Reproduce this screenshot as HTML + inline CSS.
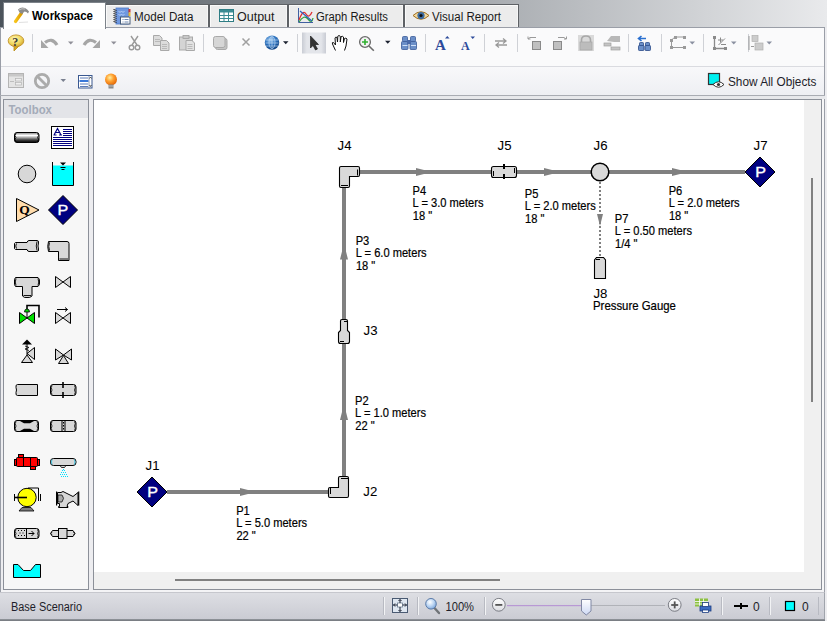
<!DOCTYPE html>
<html><head><meta charset="utf-8"><style>
html,body{margin:0;padding:0;width:827px;height:621px;overflow:hidden;background:#ededf0;font-family:"Liberation Sans",sans-serif;}
.a{position:absolute;margin:0;padding:0}
.tab{position:absolute;top:4px;height:24px;background:#ececec;border:1px solid #5e6165;border-bottom:none;box-sizing:border-box;box-shadow:inset 1px 1px 0 #fafafa, inset -1px 0 0 #f6f6f6}
.tt{position:absolute;font-size:12px;color:#1a1a1a;white-space:nowrap}
svg{position:absolute;left:0;top:0;overflow:visible}
</style></head><body>
<!-- top tab strip -->
<div class="a" style="left:0;top:0;width:827px;height:28px;background:linear-gradient(to right,#4b535b 0%,#e9eaec 100%)"></div>
<!-- tabs -->
<div class="tab" style="left:105px;width:104px"></div>
<div class="tab" style="left:209px;width:79px"></div>
<div class="tab" style="left:288px;width:116px"></div>
<div class="tab" style="left:404px;width:115px"></div>

<!-- toolbar -->
<div class="a" style="left:0;top:27px;width:825px;height:69px;background:#fafafb;border:1px solid #9a9ea7;border-bottom:none;box-sizing:border-box"></div>
<div class="a" style="left:3px;top:2px;width:103px;height:27px;background:#fff;border:1px solid #7d838a;border-bottom:none;box-sizing:border-box"></div>
<div class="a" style="left:1px;top:66px;width:823px;height:1px;background:#dadbe0"></div>
<div class="a" style="left:1px;top:67px;width:823px;height:28px;background:linear-gradient(#f8f8fa,#eeeff3)"></div>
<div class="a" style="left:0;top:95px;width:825px;height:1px;background:#a9acb3"></div>
<div class="a" style="left:0;top:96px;width:1px;height:525px;background:#9a9ea7"></div>
<div class="a" style="left:824px;top:96px;width:1px;height:525px;background:#9a9ea7"></div>
<div class="a" style="left:822px;top:99px;width:2px;height:491px;background:#f7f7f8"></div>
<div class="a" style="left:1px;top:96px;width:824px;height:3px;background:#e7e8eb"></div>
<!-- toolbox panel -->
<div class="a" style="left:3px;top:99px;width:86px;height:491px;border:1px solid #8c9099;box-sizing:border-box;background:#f7f7f7"></div>
<div class="a" style="left:4px;top:100px;width:84px;height:18px;background:#e3e4e8"></div>
<svg width="827" height="621" viewBox="0 0 827 621"><text transform="translate(8.5,113.6) scale(0.95,1)" font-family="Liberation Sans" font-weight="bold" font-size="12" fill="#a4abb8">Toolbox</text></svg>

<!-- canvas panel -->
<div class="a" style="left:93px;top:99px;width:729px;height:491px;border:1px solid #8c9099;box-sizing:border-box;background:#fff"></div>
<div class="a" style="left:804px;top:100px;width:17px;height:489px;background:#f0f0f0"></div>
<div class="a" style="left:94px;top:572px;width:727px;height:17px;background:#f0f0f0"></div>
<div class="a" style="left:811px;top:178px;width:2px;height:224px;background:#808080"></div>
<div class="a" style="left:175px;top:579px;width:325px;height:2px;background:#808080"></div>


<!-- tab content -->
<svg width="827" height="621" viewBox="0 0 827 621">
  <defs>
    <linearGradient id="hmr" x1="0" y1="0" x2="1" y2="0"><stop offset="0" stop-color="#f7c31a"/><stop offset="1" stop-color="#d99a00"/></linearGradient>
    <radialGradient id="help" cx="0.4" cy="0.35" r="0.7"><stop offset="0" stop-color="#fff6b0"/><stop offset="0.6" stop-color="#f1d860"/><stop offset="1" stop-color="#cfa02a"/></radialGradient>
    <radialGradient id="globe" cx="0.4" cy="0.3" r="0.75"><stop offset="0" stop-color="#9cc8f0"/><stop offset="0.5" stop-color="#2f74c0"/><stop offset="1" stop-color="#0a3a78"/></radialGradient>
    <radialGradient id="bulb" cx="0.4" cy="0.35" r="0.7"><stop offset="0" stop-color="#fff0a0"/><stop offset="0.45" stop-color="#ffa030"/><stop offset="1" stop-color="#e06000"/></radialGradient>
    <linearGradient id="selbtn" x1="0" y1="0" x2="1" y2="0"><stop offset="0" stop-color="#c9ccd4"/><stop offset="0.2" stop-color="#e3e5ea"/><stop offset="0.8" stop-color="#e3e5ea"/><stop offset="1" stop-color="#c9ccd4"/></linearGradient>
  </defs>
  <!-- Workspace tab -->
  <g>
    <line x1="15.5" y1="21.5" x2="21.5" y2="13" stroke="url(#hmr)" stroke-width="3.2" stroke-linecap="round"/>
    <path d="M18,9.5 Q21,6.5 25,8 Q27.5,9 29,11.5 L28,13.5 Q26.5,11.5 24.5,11.5 L22,14 L19.5,12.5 Z" fill="#8c8c8c"/>
    <path d="M19,10 Q22,8 25,9" stroke="#d0d0d0" stroke-width="0.8" fill="none"/>
    <line x1="19" y1="22.5" x2="28" y2="22" stroke="#e0e0e0" stroke-width="1"/>
  </g>
  <text x="32" y="20" font-family="Liberation Sans" font-weight="bold" font-size="12" fill="#000" textLength="61" lengthAdjust="spacingAndGlyphs">Workspace</text>
  <!-- Model Data icon -->
  <g>
    <rect x="116" y="8" width="12.5" height="16" fill="#6f98e0"/>
    <rect x="116" y="8" width="12.5" height="16" fill="none" stroke="#4c78c8" stroke-width="0.8"/>
    <path d="M118.5,11 l1.5,1.5 l1.5,-1.5 l1.5,1.5 l1.5,-1.5 M118.5,14 l1.5,1.5 l1.5,-1.5 l1.5,1.5 l1.5,-1.5" stroke="#c8dcf8" stroke-width="0.8" fill="none"/>
    <path d="M113.5,9.5 q2,0.5 3,1 M113.5,11.5 q2,0.5 3,1 M113.5,13.5 q2,0.5 3,1 M113.5,15.5 q2,0.5 3,1 M113.5,17.5 q2,0.5 3,1 M113.5,19.5 q2,0.5 3,1 M113.5,21.5 q2,0.5 3,1" stroke="#222" stroke-width="1" fill="none"/>
    <rect x="120.5" y="17" width="9.5" height="7" fill="#fff" stroke="#445a78" stroke-width="1"/>
    <path d="M122.5,19.5h1 M124.5,19.5h4 M122.5,22h1 M124.5,22h4" stroke="#6f88b0" stroke-width="1"/>
    <rect x="128.5" y="9" width="2" height="3.5" fill="#c83838"/><rect x="128.5" y="12.5" width="2" height="3.5" fill="#e8b830"/>
  </g>
  <text x="134" y="20.5" font-family="Liberation Sans" font-size="12" fill="#1a1a1a" textLength="59.5" lengthAdjust="spacingAndGlyphs">Model Data</text>
  <!-- Output icon -->
  <g>
    <rect x="219.5" y="9.5" width="14" height="12" fill="#fff" stroke="#2e7d84" stroke-width="1"/>
    <rect x="220" y="10" width="13" height="2.5" fill="#3c8c94"/>
    <path d="M220,15.5h13 M220,18.5h13 M224,10v11 M228.5,10v11" stroke="#3c8c94" stroke-width="1"/>
  </g>
  <text x="237" y="20.5" font-family="Liberation Sans" font-size="12" fill="#1a1a1a" textLength="37.5" lengthAdjust="spacingAndGlyphs">Output</text>
  <!-- Graph Results icon -->
  <g>
    <path d="M298.5,8 V22.5 H313" stroke="#4060a0" stroke-width="1" fill="none"/>
    <path d="M299,20 Q303,9 306,14 T312,12" stroke="#e03030" stroke-width="1.3" fill="none"/>
    <path d="M299,22 Q304,14 308,19 T313,18" stroke="#30a040" stroke-width="1.3" fill="none"/>
    <path d="M300,11 L312,21" stroke="#3060c0" stroke-width="1.2" fill="none"/>
  </g>
  <text x="316" y="20.5" font-family="Liberation Sans" font-size="12" fill="#1a1a1a" textLength="72" lengthAdjust="spacingAndGlyphs">Graph Results</text>
  <!-- Visual Report icon -->
  <g>
    <path d="M413,15.5 Q421,8 429,15.5 Q421,23 413,15.5 Z" fill="#f2d9a0" stroke="#a07020" stroke-width="1"/>
    <circle cx="421" cy="15.5" r="3.6" fill="#3a6aa0"/>
    <circle cx="421" cy="15.5" r="1.6" fill="#111"/>
  </g>
  <text x="432" y="20.5" font-family="Liberation Sans" font-size="12" fill="#1a1a1a" textLength="69" lengthAdjust="spacingAndGlyphs">Visual Report</text>

  <!-- ===== toolbar row 1 ===== -->
  <g>
    <!-- help -->
    <path d="M14,45 L14,51 L19.5,45.5 Z" fill="#d8a820" stroke="#b88a10" stroke-width="0.8"/>
    <ellipse cx="16" cy="40.8" rx="7.8" ry="5.9" fill="url(#help)" stroke="#c29228" stroke-width="0.9"/>
    <text x="12.3" y="46" font-family="Liberation Serif" font-weight="bold" font-size="12" fill="#3a3a3a">?</text>
    <!-- separators -->
    <g fill="#cfd1d6">
      <rect x="32" y="34" width="1" height="18"/>
      <rect x="203" y="34" width="1" height="18"/>
      <rect x="297" y="34" width="1" height="18"/>
      <rect x="425" y="34" width="1" height="18"/>
      <rect x="484" y="34" width="1" height="18"/>
      <rect x="517" y="34" width="1" height="18"/>
      <rect x="628" y="34" width="1" height="18"/>
      <rect x="661" y="34" width="1" height="18"/>
      <rect x="703" y="34" width="1" height="18"/>
      <rect x="748" y="34" width="1" height="18"/>
    </g>
    <!-- undo / redo -->
    <path d="M57,45 Q52,37 45,42.5" stroke="#a6a6a6" stroke-width="3.2" fill="none"/>
    <path d="M41,40 L41,48 L48.5,48 Z" fill="#a6a6a6"/>
    <path d="M84,45 Q89,37 96,42.5" stroke="#a6a6a6" stroke-width="3.2" fill="none"/>
    <path d="M100,40 L100,48 L92.5,48 Z" fill="#a6a6a6"/>
    <g fill="#8f8f98">
      <path d="M68,41.5 h5.5 l-2.75,3 Z"/>
      <path d="M111,41.5 h5.5 l-2.75,3 Z"/>
    </g>
    <!-- scissors -->
    <g stroke="#9a9a9a" fill="none" stroke-width="1.4">
      <path d="M131,36 L137,45 M138,36 L132,45"/>
      <circle cx="131.5" cy="47.5" r="2.3"/>
      <circle cx="137.5" cy="47.5" r="2.3"/>
    </g>
    <!-- copy -->
    <g fill="#dcdcdc" stroke="#a9a9a9" stroke-width="1">
      <path d="M153.5,35.5 h6 l2.5,2.5 v7.5 h-8.5 Z"/>
      <path d="M160.5,40.5 h6 l2.5,2.5 v7.5 h-8.5 Z"/>
    </g>
    <path d="M155,39.5h5 M155,41.5h5 M162,44.5h5 M162,46.5h5 M162,48.5h5" stroke="#b0b0b0" stroke-width="0.8"/>
    <!-- paste -->
    <rect x="179.5" y="37" width="13" height="13" fill="#d4d4d4" stroke="#a9a9a9" stroke-width="1"/>
    <rect x="183" y="35.5" width="6" height="3" fill="#c8c8c8" stroke="#a0a0a0" stroke-width="0.8"/>
    <path d="M186,40.5 h6 l2.5,2.5 v7.5 h-8.5 Z" fill="#e2e2e2" stroke="#a9a9a9" stroke-width="1"/>
    <path d="M187.5,44.5h5 M187.5,46.5h5 M187.5,48.5h5" stroke="#b0b0b0" stroke-width="0.8"/>
    <!-- duplicate -->
    <rect x="215.5" y="38.5" width="11.5" height="11" rx="2" fill="#c4c4c4" stroke="#a9a9a9" stroke-width="1"/>
    <rect x="213.5" y="36.5" width="11.5" height="11" rx="2" fill="#d6d6d6" stroke="#a9a9a9" stroke-width="1"/>
    <!-- X -->
    <path d="M242.5,38.5 L249.5,45.5 M249.5,38.5 L242.5,45.5" stroke="#a0a0a0" stroke-width="1.5"/>
    <!-- globe -->
    <circle cx="272" cy="42.6" r="7.2" fill="url(#globe)"/>
    <g stroke="#c8e0f8" stroke-width="0.7" fill="none" opacity="0.85">
      <ellipse cx="272" cy="42.6" rx="3" ry="6"/>
      <path d="M265.5,40h13 M265.5,43h13 M266,46h12 M272,36.6v12"/>
    </g>
    <path d="M283,41.2 h5.5 l-2.75,3 Z" fill="#1c2230"/>
    <!-- selected pointer button -->
    <rect x="302" y="32.5" width="24" height="21" fill="url(#selbtn)"/>
    <path d="M310.5,36 L310.5,48 L313,45.5 L315.5,50 L317.5,49 L315,44.5 L318.5,44.5 Z" fill="#333" stroke="#111" stroke-width="0.6"/>
    <!-- hand -->
    <path d="M335.5,50.5 L332.5,44 Q331.8,42 333.5,42.5 L335.5,45 L335,38 Q335.5,36.5 337,37.5 L337.5,42 L337.8,36.2 Q339,34.8 340.3,36.3 L340.3,42 L341,36.8 Q342.3,35.6 343.5,37 L343.5,42.5 L344.5,38.5 Q346,37.5 347,39 L346,46 L344.5,50.5" fill="#fff" stroke="#111" stroke-width="1"/>
    <!-- zoom -->
    <circle cx="365" cy="42" r="5.4" fill="#f4f4f4" stroke="#6a6a6a" stroke-width="1.3"/>
    <path d="M369,46 L373.8,50.8" stroke="#6a6a6a" stroke-width="1.6"/>
    <path d="M362,42h6 M365,39v6" stroke="#30b030" stroke-width="1.6"/>
    <path d="M385,40.8 h5.5 l-2.75,3 Z" fill="#1c2230"/>
    <!-- binoculars -->
    <g fill="#6b8fc8" stroke="#3b5a98" stroke-width="0.8">
      <rect x="402.5" y="36.5" width="5" height="5" rx="1"/>
      <rect x="410.5" y="36.5" width="5" height="5" rx="1"/>
      <rect x="401.5" y="41.5" width="6.5" height="8" rx="1"/>
      <rect x="410" y="41.5" width="6.5" height="8" rx="1"/>
    </g>
    <rect x="407" y="40" width="4" height="4" fill="#4a6aa8"/>
    <path d="M402.5,45.5h5 M411,45.5h5" stroke="#cfe0f8" stroke-width="1"/>
    <!-- A+ A- -->
    <text x="435" y="50" font-family="Liberation Serif" font-weight="bold" font-size="15" fill="#2c4a9a">A</text>
    <path d="M445,38.5 L447.3,36 L449.6,38.5 Z" fill="#2c4a9a"/>
    <text x="461" y="50" font-family="Liberation Serif" font-weight="bold" font-size="12" fill="#2c4a9a">A</text>
    <path d="M470.5,36.5 L475,36.5 L472.75,39 Z" fill="#2c4a9a"/>
    <!-- swap -->
    <g stroke="#9a9a9a" stroke-width="1.3" fill="none">
      <path d="M495,41 H506 M503,38.5 L506,41 L503,43.5"/>
      <path d="M507,45 H496 M499,42.5 L496,45 L499,47.5"/>
    </g>
    <!-- box arrows -->
    <rect x="532.5" y="41.5" width="8" height="8" fill="#c0c0c0" stroke="#8a8a8a" stroke-width="1"/>
    <path d="M528,39 L530,37.5 H536 M528,36.5 V39 H530.5" stroke="#9a9a9a" stroke-width="1" fill="none"/>
    <rect x="553.5" y="41.5" width="8" height="8" fill="#c0c0c0" stroke="#8a8a8a" stroke-width="1"/>
    <path d="M558,37.5 H564 L566,39 M566.5,36.5 V39 H564" stroke="#9a9a9a" stroke-width="1" fill="none"/>
    <!-- lock -->
    <rect x="578" y="35" width="16" height="16" fill="#dadada"/>
    <path d="M581.5,42 V40 Q581.5,36 586,36 Q590.5,36 590.5,40 V42" stroke="#a8a8a8" stroke-width="1.6" fill="none"/>
    <rect x="580" y="42" width="12" height="8" fill="#bcbcbc" stroke="#a8a8a8" stroke-width="0.8"/>
    <!-- layer icon -->
    <path d="M607,41 L611,36 H620 V42 L614,42 Z" fill="#b8b8b8"/>
    <rect x="604" y="43" width="7" height="3" fill="#c4c4c4" stroke="#a0a0a0" stroke-width="0.7"/>
    <rect x="611" y="47" width="9" height="3" fill="#c4c4c4" stroke="#a0a0a0" stroke-width="0.7"/>
    <!-- binoculars with arrow -->
    <g fill="#6b8fc8" stroke="#2b4a88" stroke-width="0.8">
      <rect x="639.5" y="42.5" width="4" height="4" rx="0.8"/>
      <rect x="645.5" y="42.5" width="4" height="4" rx="0.8"/>
      <rect x="638.5" y="45.5" width="5.5" height="5" rx="0.8"/>
      <rect x="645" y="45.5" width="5.5" height="5" rx="0.8"/>
    </g>
    <path d="M646,38.5 H639 M641.5,36 L638.5,38.5 L641.5,41" stroke="#2a70d0" stroke-width="1.6" fill="none"/>
    <!-- polyline -->
    <path d="M671.5,47.5 L671.5,40 L675,37 H684.5 M671.5,47.5 H684.5" stroke="#9a9a9a" stroke-width="1" fill="none"/>
    <g fill="#9a9a9a">
      <rect x="670" y="46" width="3" height="3"/><rect x="670" y="39" width="3" height="3"/><rect x="674" y="36" width="3" height="3"/><rect x="683" y="36" width="3" height="3"/><rect x="683" y="46" width="3" height="3"/>
    </g>
    <path d="M689.5,41.5 h5.5 l-2.75,3 Z" fill="#8a90a0"/>
    <!-- axis -->
    <path d="M714.5,37 V48.5 H726" stroke="#8a8a8a" stroke-width="1.3" fill="none"/>
    <rect x="713" y="36" width="3" height="3" fill="#8a8a8a"/><rect x="713" y="47" width="3" height="3" fill="#8a8a8a"/><rect x="724" y="47" width="3" height="3" fill="#8a8a8a"/>
    <path d="M718,40h5 M720.5,37.5v5 M718.5,45 L725,38.5 M721,44.5h5" stroke="#8a8a8a" stroke-width="1" fill="none"/>
    <path d="M731,41.5 h5.5 l-2.75,3 Z" fill="#8a90a0"/>
    <!-- align -->
    <rect x="748.5" y="36" width="1" height="14" fill="#9a9a9a"/>
    <rect x="752" y="35.5" width="6" height="6" fill="#cccccc" stroke="#b0b0b0" stroke-width="0.7"/>
    <rect x="755" y="43" width="8" height="7" fill="#cccccc" stroke="#b0b0b0" stroke-width="0.7"/>
    <path d="M751,46.5h3" stroke="#9a9a9a" stroke-width="1"/>
    <path d="M766.5,41.5 h5.5 l-2.75,3 Z" fill="#8a90a0"/>
  </g>

  <!-- ===== toolbar row 2 ===== -->
  <g>
    <rect x="8.5" y="73.5" width="15" height="14" fill="#e4e4e4" stroke="#b4b4b4" stroke-width="1"/>
    <rect x="9" y="74" width="14" height="2.5" fill="#c8c8c8"/>
    <rect x="15.5" y="78.5" width="6" height="2.5" fill="#efefef" stroke="#b4b4b4" stroke-width="0.7"/>
    <rect x="15.5" y="82.5" width="6" height="2.5" fill="#efefef" stroke="#b4b4b4" stroke-width="0.7"/>
    <path d="M10,81.5h4" stroke="#b4b4b4" stroke-width="0.8"/>
    <circle cx="42" cy="81" r="6.7" fill="none" stroke="#ababab" stroke-width="2.8"/>
    <path d="M37.5,76.5 L46.5,85.5" stroke="#ababab" stroke-width="2.8"/>
    <path d="M60.5,79 h5.5 l-2.75,3 Z" fill="#7a8090"/>
    <rect x="78.5" y="75.5" width="13.5" height="12.5" fill="#fff" stroke="#3a5890" stroke-width="1"/>
    <path d="M80,78h8 M80,81h8 M80,84h8 M80,86.5h8" stroke="#5a7ab8" stroke-width="1"/>
    <rect x="79.5" y="80" width="9" height="2" fill="#3a78d8"/>
    <path d="M89,76v12" stroke="#7a8aa8" stroke-width="0.8"/>
    <path d="M89.5,78.5 L90.5,77 L91.5,78.5 M89.5,85 L90.5,86.5 L91.5,85" stroke="#333" stroke-width="0.8" fill="none"/>
    <circle cx="111" cy="79.5" r="6" fill="url(#bulb)"/>
    <rect x="108.5" y="84.5" width="5" height="4" fill="#8a8a8a"/>
    <path d="M108.5,86h5" stroke="#c8c8c8" stroke-width="0.8"/>
    <!-- show all objects -->
    <rect x="708.5" y="73.5" width="11" height="11" fill="#00f0f0" stroke="#333" stroke-width="1.2"/>
    <path d="M713,84.5 Q718.5,79 724,84.5 Q718.5,90 713,84.5 Z" fill="#fff" stroke="#333" stroke-width="1"/>
    <circle cx="718.5" cy="84.5" r="1.6" fill="#333"/>
  </g>
  <text x="728" y="86" font-family="Liberation Sans" font-size="12" fill="#1e1e2a" textLength="88.5" lengthAdjust="spacingAndGlyphs">Show All Objects</text>
</svg>


<!-- toolbox icons -->
<svg width="827" height="621" viewBox="0 0 827 621">
  <defs>
    <linearGradient id="pipeg" x1="0" y1="0" x2="0" y2="1"><stop offset="0" stop-color="#808080"/><stop offset="0.3" stop-color="#ffffff"/><stop offset="0.75" stop-color="#404040"/><stop offset="1" stop-color="#000"/></linearGradient>
  </defs>
  <!-- pipe -->
  <rect x="14.5" y="132.5" width="24.5" height="10" rx="2.5" fill="url(#pipeg)" stroke="#000" stroke-width="1"/>
  <path d="M16,133.5 Q14,135.5 16,137.5 Q14,139.5 16,141.5 M37.5,133.5 Q39.5,135.5 37.5,137.5 Q39.5,139.5 37.5,141.5" stroke="#000" stroke-width="0.8" fill="none"/>
  <!-- annotation -->
  <rect x="51.5" y="126.5" width="22" height="22" fill="#fff" stroke="#000" stroke-width="1"/>
  <path d="M54,135 L57.5,128.5 L61,135 M55.5,132.5h4 M53.5,135h3 M59,135h3" stroke="#000080" stroke-width="1.2" fill="none"/>
  <path d="M63,129.5h9 M63,131.5h9 M63,133.5h9 M63,135.5h9 M53,137.5h19 M53,139.5h19 M53,141.5h19 M53,143.5h19 M53,145.5h19" stroke="#000080" stroke-width="1"/>
  <!-- circle junction -->
  <circle cx="27" cy="174" r="8.8" fill="#d8d8d8" stroke="#000" stroke-width="1"/>
  <!-- reservoir -->
  <rect x="52.5" y="165.5" width="21" height="20" fill="#00ffff"/>
  <path d="M52.5,162 V185.5 H73.5 V162" stroke="#000" stroke-width="1" fill="none"/>
  <path d="M60,162.5 h6 l-3,3 Z" fill="#000"/>
  <path d="M60.5,167.5h5 M61.5,169.5h3" stroke="#000" stroke-width="1"/>
  <!-- Q -->
  <path d="M16.5,198.5 L39,210 L16.5,221.5 Z" fill="#ffdcac" stroke="#000" stroke-width="1"/>
  <text transform="translate(19.3,213.5) scale(1,1)" font-family="Liberation Serif" font-weight="bold" font-size="13.5" fill="#000">Q</text>
  <!-- P diamond -->
  <polygon points="63,195.5 77.5,210 63,224.5 48.5,210" fill="#000080" stroke="#000" stroke-width="1"/>
  <text transform="translate(57.6,215) scale(1.15,1)" font-family="Liberation Sans" font-size="14" fill="#fff" stroke="#fff" stroke-width="0.35">P</text>

  <g fill="#d8d8d8" stroke="#000" stroke-width="1">
    <!-- reducer -->
    <path d="M15.5,242.5 H27 Q27.5,240.5 29,240.5 H37 Q39,240.5 38.5,243 Q37.5,246 38.5,249 Q39,251.5 37,251.5 H29 Q27.5,251.5 27,249.5 H15.5 Q14,249.5 14.5,246 Q14,242.5 15.5,242.5 Z"/>
    <!-- elbow -->
    <path d="M48.5,241.5 H67 Q69,241.5 69,243.5 V260.5 H58.5 V251.5 H48.5 Q47,246.5 48.5,241.5 Z"/>
    <!-- tee -->
    <path d="M15.5,277.5 H38 Q40,279 39.5,282 Q40,285 38,286.5 H32 V296 Q30,298 27,297.5 Q24,298 22.5,296 V286.5 H15.5 Q14,285 14.5,282 Q14,279 15.5,277.5 Z"/>
    <!-- valve -->
    <path d="M55.5,276.5 L63,282 L70.5,276.5 V287.5 L63,282 L55.5,287.5 Z"/>
    <!-- check valve -->
    <path d="M55.5,312.5 L63,318 L70.5,312.5 V323.5 L63,318 L55.5,323.5 Z"/>
    <!-- relief valve -->
    <path d="M27,353.5 L34.5,347.5 V359.5 Z"/>
    <path d="M21.5,362.5 L27,355 L32.5,362.5 Z"/>
    <!-- 3 way -->
    <path d="M55.5,349 L63.5,355 L71.5,349 V360 L63.5,355 L55.5,360 Z"/>
    <path d="M58.5,363.5 L63.5,355.5 L68.5,363.5 Z"/>
    <!-- dead end -->
    <path d="M17.5,384.5 H37.5 V395.5 H17.5 Q15.5,395.5 16,392.5 Q17,390 16,387.5 Q15.5,384.5 17.5,384.5 Z"/>
    <!-- orifice -->
    <rect x="50.5" y="384.5" width="25.5" height="11" rx="2.5"/>
    <!-- venturi -->
    <rect x="14.5" y="420.5" width="24" height="11" rx="2.5"/>
    <!-- screen -->
    <rect x="50.5" y="420.5" width="25.5" height="11" rx="2.5"/>
    <!-- spray -->
    <rect x="50.5" y="458.5" width="25.5" height="7" rx="3"/>
    <!-- turbine body -->
    <path d="M57.5,492.5 H61 L63,491.5 L73,496.5 L78,492.5 V505.5 L73,501 L68,503.5 L67,506.5 H68 V507.5 H58.5 V506.5 H59.5 V503.5 H57.5 Z"/>
    <!-- filter -->
    <rect x="14.5" y="528.5" width="24.5" height="10" rx="2.5"/>
    <!-- pressure loss -->
    <path d="M50.5,533.5 L52.5,530.5 H73 L75,533.5 L73,536.5 H52.5 Z"/>
    <rect x="58.5" y="528.5" width="8.5" height="10"/>
  </g>
  <!-- pipe end curls -->
  <path d="M16,421.5 Q14.5,423.5 16,426 Q14.5,428.5 16,430.5 M37,421.5 Q38.5,423.5 37,426 Q38.5,428.5 37,430.5 M52,421.5 Q50.5,423.5 52,426 Q50.5,428.5 52,430.5 M74.5,421.5 Q76,423.5 74.5,426 Q76,428.5 74.5,430.5 M52,385.5 Q50.5,387.5 52,390 Q50.5,392.5 52,394.5 M74.5,385.5 Q76,387.5 74.5,390 Q76,392.5 74.5,394.5 M16,529.5 Q14.5,531.5 16,533.5 Q14.5,535.5 16,537.5 M37.5,529.5 Q39,531.5 37.5,533.5 Q39,535.5 37.5,537.5" stroke="#000" stroke-width="0.8" fill="none"/>
  <path d="M16.5,243.5 Q15,246 16.5,248.5 M37,241.5 Q35.5,246 37,250.5 M49.5,242.5 Q48,246.5 49.5,250.5 M59.5,259 H68 M16,278.5 Q14.5,282 16,285.5 M38,278.5 Q39.5,282 38,285.5 M23.5,295.5 H31" stroke="#000" stroke-width="0.9" fill="none"/>
  <!-- orifice tick -->
  <path d="M63,382 V388 M63,392 V398" stroke="#000" stroke-width="1.6"/>
  <!-- venturi throat -->
  <path d="M20,421 L24,423.3 H30 L34,421 Z M20,431 L24,428.7 H30 L34,431 Z" fill="#000"/>
  <!-- screen dashes -->
  <path d="M62,421 V431 M65,421 V431" stroke="#000" stroke-width="1"/>
  <path d="M63.5,422v1.5 M63.5,425v1.5 M63.5,428v1.5" stroke="#000" stroke-width="1"/>
  <!-- green control valve -->
  <path d="M19.5,312.5 L27,318 L34.5,312.5 V323.5 L27,318 L19.5,323.5 Z" fill="#00e000" stroke="#000" stroke-width="1"/>
  <path d="M27,318 V311" stroke="#000" stroke-width="1"/>
  <path d="M24.5,312 Q24.5,309 27,309 Q29.5,309 29.5,312 Z" fill="#00e000" stroke="#000" stroke-width="0.8"/>
  <path d="M27,309 V305.5 H39 V317.5" stroke="#000" stroke-width="1.6" fill="none"/>
  <!-- check arrow -->
  <path d="M57,309.5 H67.5 M65,307.5 L67.5,309.5 L65,311.5" stroke="#000" stroke-width="1" fill="none"/>
  <!-- relief stem -->
  <path d="M27,355 V344" stroke="#000" stroke-width="1"/>
  <path d="M22,344.5 L27,339.5 L32,344.5 Z" fill="#000"/>
  <path d="M25,346 L29,347.5 L25,349 L29,350.5" stroke="#000" stroke-width="0.8" fill="none"/>
  <!-- heat exchanger -->
  <g fill="#ff0000" stroke="#000" stroke-width="1">
    <rect x="18.5" y="454.5" width="5" height="3"/>
    <rect x="30.5" y="466" width="5" height="3.5"/>
    <rect x="14.5" y="459.5" width="2" height="6"/>
    <rect x="37.5" y="459.5" width="2" height="6"/>
    <rect x="16.5" y="457.5" width="21" height="9" rx="1"/>
  </g>
  <path d="M23.5,457.5 V466.5 M30.5,457.5 V466.5" stroke="#000" stroke-width="1"/>
  <!-- spray nozzle -->
  <path d="M60,465.5 H66 L64.5,467.5 H61.5 Z" fill="#d8d8d8" stroke="#000" stroke-width="0.8"/>
  <path d="M52,459.5 Q51,462 52,464.5 M74.5,459.5 Q75.5,462 74.5,464.5" stroke="#30c0e0" stroke-width="0.9" fill="none"/>
  <g fill="#00e0ff">
    <rect x="63" y="469" width="1" height="1"/><rect x="62" y="470" width="1" height="1"/><rect x="64" y="470" width="1" height="1"/>
    <rect x="61" y="472" width="1" height="1"/><rect x="63" y="472" width="1" height="1"/><rect x="65" y="472" width="1" height="1"/>
    <rect x="60" y="474" width="1" height="1"/><rect x="62" y="474" width="1" height="1"/><rect x="64" y="474" width="1" height="1"/><rect x="66" y="474" width="1" height="1"/>
    <rect x="61" y="476" width="1" height="1"/><rect x="63" y="476" width="1" height="1"/><rect x="65" y="476" width="1" height="1"/><rect x="67" y="476" width="1" height="1"/>
  </g>
  <!-- pump -->
  <path d="M19,511 L22,507.5 H31 L34,511 Z" fill="#808080" stroke="#000" stroke-width="0.8"/>
  <circle cx="27" cy="497.5" r="9.2" fill="#ffff00" stroke="#000" stroke-width="1"/>
  <path d="M14.5,497.5 H27" stroke="#000" stroke-width="1.6"/>
  <path d="M14.5,494 V501" stroke="#000" stroke-width="1"/>
  <path d="M28,488 H38.5 V500 M38.5,495 V501 M40.5,494 V501" stroke="#000" stroke-width="1" fill="none"/>
  <!-- turbine details -->
  <path d="M58,495 H62 Q65,498 62,502 H58 Z" fill="#a8a8a8" stroke="#000" stroke-width="0.7"/>
  <path d="M56.6,491.5 V505.5 M78.7,491.5 V505.5" stroke="#000" stroke-width="1.2"/>
  <path d="M52,532 L51,533.5 L52,535 M73.5,532 L74.5,533.5 L73.5,535" stroke="#000" stroke-width="0.7" fill="none"/>
  <!-- filter dots / arrow -->
  <path d="M26.5,528.5 V538.5" stroke="#000" stroke-width="1"/>
  <g fill="#000">
    <rect x="18" y="530" width="1" height="1"/><rect x="21" y="530" width="1" height="1"/><rect x="24" y="530" width="1" height="1"/>
    <rect x="19.5" y="532.5" width="1" height="1"/><rect x="22.5" y="532.5" width="1" height="1"/>
    <rect x="18" y="535" width="1" height="1"/><rect x="21" y="535" width="1" height="1"/><rect x="24" y="535" width="1" height="1"/>
  </g>
  <path d="M28.5,533.5 H34 M31.5,531 L34,533.5 L31.5,536" stroke="#000" stroke-width="1" fill="none"/>
  <!-- tank -->
  <path d="M13.5,564.5 H18 L23.5,570.5 H30.5 L35.5,564.5 H40.5 V577.5 H13.5 Z" fill="#00ffff" stroke="#000" stroke-width="1"/>
</svg>

<div class="a" style="left:1px;top:590px;width:823px;height:2px;background:#f4f4f6"></div>
<!-- status bar -->
<div class="a" style="left:0;top:592px;width:825px;height:29px;background:linear-gradient(#dddee3,#c9cad2);border-top:1px solid #c6c7cd;border-right:1px solid #a0a4ac;box-sizing:border-box"></div>
<div class="a" style="left:0;top:619px;width:825px;height:1px;background:#8c9096"></div><div class="a" style="left:0;top:620px;width:825px;height:1px;background:#7a7e84"></div>
<svg width="827" height="621" viewBox="0 0 827 621">
  <defs>
    <linearGradient id="thumbg" x1="0" y1="0" x2="0" y2="1"><stop offset="0" stop-color="#ffffff"/><stop offset="1" stop-color="#cdd8f4"/></linearGradient>
    <radialGradient id="lensg" cx="0.4" cy="0.35" r="0.7"><stop offset="0" stop-color="#ffffff"/><stop offset="0.5" stop-color="#c0d8f4"/><stop offset="1" stop-color="#7aa6dc"/></radialGradient>
    <linearGradient id="circg" x1="0" y1="0" x2="0" y2="1"><stop offset="0" stop-color="#ffffff"/><stop offset="1" stop-color="#dcdde2"/></linearGradient>
  </defs>
  <text x="11" y="610.5" font-family="Liberation Sans" font-size="12" fill="#1e1e2a" textLength="71" lengthAdjust="spacingAndGlyphs">Base Scenario</text>
  <g>
    <rect x="383" y="597" width="1" height="18" fill="#b8bac2"/><rect x="384" y="597" width="1" height="18" fill="#f2f3f5"/>
    <rect x="417" y="597" width="1" height="18" fill="#b8bac2"/><rect x="418" y="597" width="1" height="18" fill="#f2f3f5"/>
    <rect x="484" y="597" width="1" height="18" fill="#b8bac2"/><rect x="485" y="597" width="1" height="18" fill="#f2f3f5"/>
    <rect x="721" y="597" width="1" height="18" fill="#b8bac2"/><rect x="722" y="597" width="1" height="18" fill="#f2f3f5"/>
    <rect x="769" y="597" width="1" height="18" fill="#b8bac2"/><rect x="770" y="597" width="1" height="18" fill="#f2f3f5"/>
    <rect x="818" y="597" width="1" height="18" fill="#b8bac2"/>
  </g>
  <!-- fit -->
  <rect x="392.5" y="598.5" width="15" height="14" fill="#dfe7f1" stroke="#4a5a72" stroke-width="1"/>
  <rect x="397.5" y="603" width="5" height="4" fill="#fff" stroke="#6a7a90" stroke-width="0.8"/>
  <path d="M400,599.5 V603 M400,607 V611.5 M393.5,605 H397.5 M402.5,605 H406.5" stroke="#1a2030" stroke-width="1"/>
  <path d="M398.5,601 L400,599.5 L401.5,601 M398.5,610 L400,611.5 L401.5,610 M395,603.5 L393.5,605 L395,606.5 M405,603.5 L406.5,605 L405,606.5" stroke="#1a2030" stroke-width="1" fill="none"/>
  <!-- magnifier -->
  <path d="M434.5,608 L439,613" stroke="#707478" stroke-width="2.4" stroke-linecap="round"/>
  <circle cx="431" cy="603.8" r="5.3" fill="url(#lensg)" stroke="#5a7aa8" stroke-width="1"/>
  <text x="445.5" y="611" font-family="Liberation Sans" font-size="12" fill="#1e1e2a" textLength="28.5" lengthAdjust="spacingAndGlyphs">100%</text>
  <!-- minus -->
  <circle cx="498.8" cy="604.8" r="6.4" fill="url(#circg)" stroke="#7a7c84" stroke-width="1"/>
  <rect x="495.3" y="604" width="7" height="1.8" fill="#555"/>
  <!-- slider -->
  <rect x="507" y="605" width="76" height="1.2" fill="#b898d4"/>
  <rect x="590" y="605" width="75" height="1" fill="#b0b2b8"/>
  <path d="M581.5,599.5 H591 V611 L586.25,615 L581.5,611 Z" fill="url(#thumbg)" stroke="#8088a4" stroke-width="1"/>
  <!-- plus -->
  <circle cx="674.7" cy="604.9" r="6.4" fill="url(#circg)" stroke="#7a7c84" stroke-width="1"/>
  <rect x="671.2" y="604.1" width="7" height="1.8" fill="#555"/>
  <rect x="673.8" y="601.4" width="1.8" height="7" fill="#555"/>
  <!-- print -->
  <rect x="695" y="598.5" width="13" height="8" fill="#8cc040"/>
  <path d="M695,601.5 h13 M695,604 h13 M699.5,598.5 v8 M703.5,598.5 v8" stroke="#fff" stroke-width="0.8"/>
  <rect x="700" y="606" width="11" height="5" fill="#3c6cc0" stroke="#1c3c80" stroke-width="0.8"/>
  <rect x="702.5" y="602.5" width="6" height="4" fill="#fff" stroke="#1c3c80" stroke-width="0.8"/>
  <rect x="702.5" y="610" width="6" height="2.6" fill="#fff" stroke="#1c3c80" stroke-width="0.8"/>
  <!-- pipe count -->
  <rect x="734" y="605" width="14" height="2" fill="#000"/>
  <rect x="740" y="603" width="2" height="6" fill="#000"/>
  <text x="753" y="611" font-family="Liberation Sans" font-size="12" fill="#1e1e2a">0</text>
  <rect x="785.5" y="601.5" width="9" height="9" fill="#00ffff" stroke="#000" stroke-width="1.2"/>
  <text x="802" y="611" font-family="Liberation Sans" font-size="12" fill="#1e1e2a">0</text>
</svg>

<svg width="827" height="621" viewBox="0 0 827 621">
  <!-- diagram pipes -->
  <g fill="#808080" stroke="none">
    <rect x="167" y="490" width="161" height="4"/>
    <rect x="342" y="344" width="4" height="132"/>
    <rect x="342" y="187" width="4" height="132"/>
    <rect x="360" y="170" width="131" height="4"/>
    <rect x="517" y="170" width="74" height="4"/>
    <rect x="609" y="170" width="136" height="4"/>
    <polygon points="240,488 240,496 256,492"/>
    <polygon points="340,420 348,420 344,404"/>
    <polygon points="340,259.5 348,259.5 344,243.5"/>
    <polygon points="416,168 416,176 432,172"/>
    <polygon points="544,168 544,176 560,172"/>
    <polygon points="672,168 672,176 688,172"/>
  </g>
  <line x1="600" y1="182" x2="600" y2="257" stroke="#808080" stroke-width="2" stroke-dasharray="2 2"/>
  <polygon points="597,214 603,214 600,226" fill="#808080"/>
  <!-- junctions -->
  <g stroke="#000" stroke-width="1.1" fill="#d9d9d9">
    <path d="M328.5,489 Q328.5,487.5 330,487.5 H338.5 V478 Q338.5,476.5 340,476.5 H347 Q348.5,476.5 348.5,478 V496 Q348.5,497.5 347,497.5 H330 Q328.5,497.5 328.5,496 Z"/>
    <path d="M339.5,168 Q339.5,166.5 341,166.5 H358 Q359.5,166.5 359.5,168 V175 Q359.5,176.5 358,176.5 H349.5 V186 Q349.5,187.5 348,187.5 H341 Q339.5,187.5 339.5,186 Z"/>
    <path d="M340.5,330.5 V321 Q340.5,319.5 342,319.5 H346 Q347.5,319.5 347.5,321 V330.5 L349.5,332.5 V341.5 Q349.5,343.5 347.5,343.5 H340.5 Q338.5,343.5 338.5,341.5 V332.5 Z"/>
    <rect x="491.5" y="166.5" width="25" height="11" rx="2"/>
    <circle cx="600" cy="172" r="8.8" stroke-width="1.5"/>
    <path d="M594.5,278.5 V260 L596.5,257.5 H603.5 L605.5,260 V278.5 Z"/>
  </g>
  <g stroke="#000" stroke-width="1" fill="none">
    <path d="M341,478.5 H348 M330.5,488 V494"/>
    <path d="M357.5,169.5 V175.5 M341,185.5 H348"/>
    <path d="M344,321.5 H347 M340,341.5 H344"/>
    <path d="M493.5,171 V176 M514.5,168 V173"/>
    <path d="M596,259.5 H600"/>
  </g>
  <rect x="503" y="164" width="2" height="5" fill="#000"/>
  <rect x="503" y="174" width="2" height="5" fill="#000"/>
  <g fill="#000080" stroke="#000" stroke-width="1">
    <polygon points="152,477 167,492 152,507 137,492"/>
    <polygon points="760,157 775,172 760,187 745,172"/>
  </g>
  <g fill="#fff" stroke="#fff" stroke-width="0.35" font-size="14" font-family="Liberation Sans">
    <text transform="translate(147.2,497) scale(1.15,1)">P</text>
    <text transform="translate(755.2,177) scale(1.15,1)">P</text>
  </g>
  <g fill="#000" stroke="#000" stroke-width="0.2" font-size="12" font-family="Liberation Sans">
  <text transform="translate(145.6,470.0) scale(1.1,1)" stroke-width="0.05">J1</text>
  <text transform="translate(363.3,496.0) scale(1.1,1)" stroke-width="0.05">J2</text>
  <text transform="translate(363.6,335.4) scale(1.1,1)" stroke-width="0.05">J3</text>
  <text transform="translate(337.6,150.0) scale(1.1,1)" stroke-width="0.05">J4</text>
  <text transform="translate(497.6,150.0) scale(1.1,1)" stroke-width="0.05">J5</text>
  <text transform="translate(593.6,150.0) scale(1.1,1)" stroke-width="0.05">J6</text>
  <text transform="translate(753.6,150.0) scale(1.1,1)" stroke-width="0.05">J7</text>
  <text transform="translate(593.5,298.0) scale(1.1,1)" stroke-width="0.05">J8</text>
  <text transform="translate(236.2,514.7) scale(0.927,1)">P1</text>
  <text transform="translate(236.2,527.2) scale(0.927,1)">L = 5.0 meters</text>
  <text transform="translate(236.4,539.7) scale(0.927,1)">22 "</text>
  <text transform="translate(355.1,404.7) scale(0.927,1)">P2</text>
  <text transform="translate(355.1,417.2) scale(0.927,1)">L = 1.0 meters</text>
  <text transform="translate(355.3,429.7) scale(0.927,1)">22 "</text>
  <text transform="translate(355.7,244.9) scale(0.927,1)">P3</text>
  <text transform="translate(355.7,257.4) scale(0.927,1)">L = 6.0 meters</text>
  <text transform="translate(355.9,269.9) scale(0.927,1)">18 "</text>
  <text transform="translate(412.6,194.7) scale(0.927,1)">P4</text>
  <text transform="translate(412.6,207.2) scale(0.927,1)">L = 3.0 meters</text>
  <text transform="translate(412.8,219.7) scale(0.927,1)">18 "</text>
  <text transform="translate(524.8,197.6) scale(0.927,1)">P5</text>
  <text transform="translate(524.8,210.1) scale(0.927,1)">L = 2.0 meters</text>
  <text transform="translate(525.0,222.6) scale(0.927,1)">18 "</text>
  <text transform="translate(668.7,194.6) scale(0.927,1)">P6</text>
  <text transform="translate(668.7,207.1) scale(0.927,1)">L = 2.0 meters</text>
  <text transform="translate(668.9,219.6) scale(0.927,1)">18 "</text>
  <text transform="translate(614.8,222.6) scale(0.927,1)">P7</text>
  <text transform="translate(614.8,235.1) scale(0.927,1)">L = 0.50 meters</text>
  <text transform="translate(615.0,247.6) scale(0.927,1)">1/4 "</text>
  <text transform="translate(593.0,309.9) scale(0.95,1)">Pressure Gauge</text>
  </g>
</svg>
</body></html>
